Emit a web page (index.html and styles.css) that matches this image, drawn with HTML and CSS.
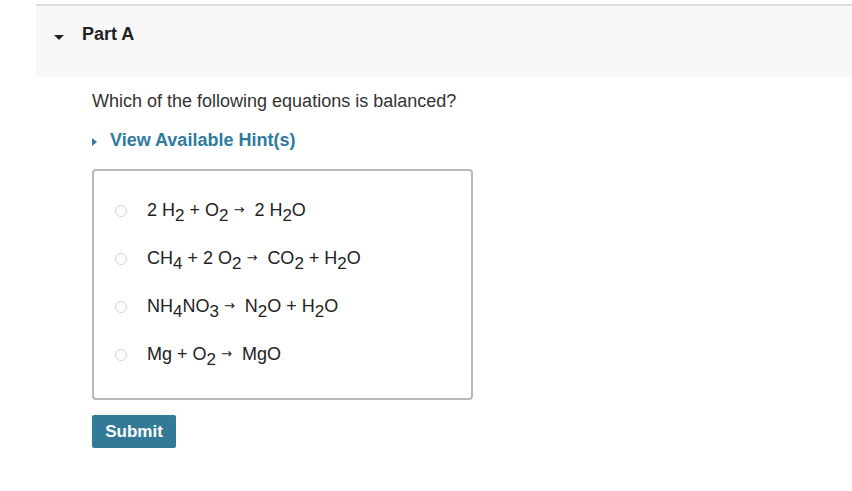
FILE: index.html
```html
<!DOCTYPE html>
<html>
<head>
<meta charset="utf-8">
<link rel="stylesheet" href="styles.css">
</head>
<body>
<div class="part-header">
  <span class="caret-down"></span>
  <span class="part-title">Part A</span>
</div>
<div class="part-body">
  <p class="question">Which of the following equations is balanced?</p>
  <div class="hint"><span class="caret-right"></span><span class="hint-text">View Available Hint(s)</span></div>
  <div class="choices">
    <div class="choice"><span class="radio"></span><span class="eq">2 H<sub>2</sub> + O<sub>2</sub><span class="arrow">→</span>2 H<sub>2</sub>O</span></div>
    <div class="choice"><span class="radio"></span><span class="eq">CH<sub>4</sub> + 2 O<sub>2</sub><span class="arrow">→</span>CO<sub>2</sub> + H<sub>2</sub>O</span></div>
    <div class="choice"><span class="radio"></span><span class="eq">NH<sub>4</sub>NO<sub>3</sub><span class="arrow">→</span>N<sub>2</sub>O + H<sub>2</sub>O</span></div>
    <div class="choice"><span class="radio"></span><span class="eq">Mg + O<sub>2</sub><span class="arrow">→</span>MgO</span></div>
  </div>
  <button class="submit">Submit</button>
</div>
</body>
</html>
```
FILE: styles.css
```css
html, body {
  margin: 0;
  padding: 0;
  background: #fff;
  font-family: "Liberation Sans", Arial, sans-serif;
  color: #333;
}
.part-header {
  margin-top: 4px;
  margin-left: 36px;
  border-top: 2px solid #dedede;
  background: #f8f8f8;
  height: 73px;
  display: flex;
  align-items: flex-start;
  padding-top: 17px;
  box-sizing: border-box;
}
.caret-down {
  width: 0;
  height: 0;
  border-left: 5px solid transparent;
  border-right: 5px solid transparent;
  border-top: 5px solid #222;
  margin-left: 18px;
  margin-top: 12px;
}
.part-title {
  margin-left: 18px;
  font-weight: bold;
  font-size: 18px;
  line-height: 22px;
  color: #222;
}
.part-body {
  padding-left: 92px;
}
.question {
  margin: 13px 0 0 0;
  font-size: 18px;
  line-height: 22px;
  color: #333;
}
.hint {
  margin-top: 17px;
  display: flex;
  align-items: center;
  height: 22px;
}
.caret-right {
  width: 0;
  height: 0;
  border-top: 4px solid transparent;
  border-bottom: 4px solid transparent;
  border-left: 5px solid #2f7a9e;
  margin-top: 3px;
}
.hint-text {
  margin-left: 13px;
  font-weight: bold;
  font-size: 18px;
  line-height: 22px;
  color: #2f7a9e;
}
.choices {
  margin-top: 18px;
  width: 381px;
  height: 231px;
  box-sizing: border-box;
  border: 2px solid #b8b8b8;
  border-radius: 4px;
  padding: 15px 0 0 21px;
  display: flex;
  flex-direction: column;
}
.choice {
  height: 48px;
  display: flex;
  align-items: center;
}
.radio {
  width: 10px;
  height: 10px;
  border: 1px solid #d4d4d4;
  border-radius: 50%;
  background: #fff;
  flex: none;
  margin-top: 2px;
}
.eq {
  margin-left: 20px;
  font-size: 18px;
  line-height: 22px;
  color: #222;
}
.eq sub {
  font-size: 17px;
  vertical-align: -5px;
  line-height: 0;
}
.arrow {
  display: inline-block;
  font-family: "DejaVu Sans", sans-serif;
  font-size: 13px;
  vertical-align: 2px;
  margin: 0 10px 0 5px;
}
.submit {
  margin-top: 15px;
  width: 84px;
  height: 33px;
  background: #337a99;
  border: none;
  border-radius: 2px;
  color: #fff;
  font-family: "Liberation Sans", Arial, sans-serif;
  font-weight: bold;
  font-size: 17px;
  padding: 0;
}
```
